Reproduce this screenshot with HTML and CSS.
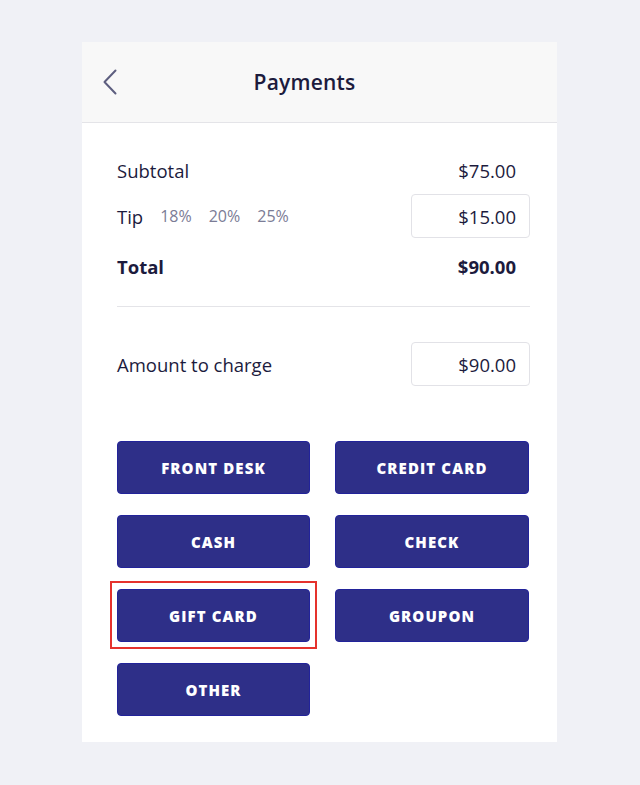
FILE: index.html
```html
<!DOCTYPE html>
<html lang="en">
<head>
  <meta charset="UTF-8">
  <meta name="viewport" content="width=device-width, initial-scale=1.0">
  <title>Payments</title>
  <link rel="stylesheet" href="styles.css">
</head>
<body>
  <div class="payments-card">
    <div class="header">
      <button class="back-button" aria-label="Back">
        <svg width="14" height="26" viewBox="0 0 14 26">
          <polyline points="12.5,1.5 1.5,13 12.5,24.5" fill="none" stroke="#5d5e7f" stroke-width="2" stroke-linecap="round" stroke-linejoin="round"/>
        </svg>
      </button>
      <div class="header-title">Payments</div>
    </div>

    <div class="content">
      <div class="summary-row">
        <span class="row-label">Subtotal</span>
        <span class="row-value">$75.00</span>
      </div>
      <div class="summary-row tip-row">
        <div class="tip-left">
          <span class="row-label">Tip</span>
          <span class="tip-option">18%</span>
          <span class="tip-option">20%</span>
          <span class="tip-option">25%</span>
        </div>
        <input class="amount-input" type="text" value="$15.00">
      </div>
      <div class="summary-row total-row">
        <span class="row-label">Total</span>
        <span class="row-value">$90.00</span>
      </div>

      <div class="divider"></div>

      <div class="summary-row charge-row">
        <span class="row-label">Amount to charge</span>
        <input class="amount-input" type="text" value="$90.00">
      </div>

      <div class="method-grid">
        <button class="method-button">FRONT DESK</button>
        <button class="method-button">CREDIT CARD</button>
        <button class="method-button">CASH</button>
        <button class="method-button">CHECK</button>
        <button class="method-button selected">GIFT CARD</button>
        <button class="method-button">GROUPON</button>
        <button class="method-button">OTHER</button>
      </div>
    </div>
  </div>
</body>
</html>
```

FILE: styles.css
```css
body {
  margin: 0;
  background-color: #f0f1f6;
  font-family: "Open Sans", "Liberation Sans", sans-serif;
  color: #1c1b3d;
}

.payments-card {
  width: 475px;
  margin: 42px 0 0 82px;
  background-color: #ffffff;
  box-sizing: border-box;
  min-height: 700px;
}

.header {
  height: 81px;
  box-sizing: border-box;
  display: flex;
  align-items: center;
  padding: 0 65px 0 21px;
  background-color: #f8f8f8;
  border-bottom: 1px solid #e4e4e8;
}

.back-button {
  border: none;
  background: none;
  padding: 0;
  display: flex;
  cursor: pointer;
}

.header-title {
  flex: 1;
  text-align: center;
  font-size: 21px;
  font-weight: 600;
  letter-spacing: 0.2px;
}

.content {
  padding: 29px 27px 26px 35px;
}

.summary-row {
  display: flex;
  justify-content: space-between;
  align-items: center;
  height: 36px;
  font-size: 18.5px;
}

.row-value {
  padding-right: 14px;
}

.tip-row {
  height: 44px;
  margin-top: 6px;
}

.tip-left {
  display: flex;
  align-items: center;
}

.tip-option {
  font-size: 16px;
  color: #7b7c96;
  margin-left: 17px;
}

.tip-option:first-of-type {
  margin-left: 21px;
}

.total-row {
  margin-top: 10px;
  font-weight: 700;
}

.amount-input {
  width: 119px;
  height: 44px;
  box-sizing: border-box;
  border: 1px solid #e2e2e7;
  border-radius: 4px;
  padding: 0 13px 0 0;
  text-align: right;
  font-family: inherit;
  font-size: 18.5px;
  color: #1c1b3d;
  background-color: #ffffff;
}

.divider {
  height: 1px;
  background-color: #e4e4e8;
  margin-top: 22px;
}

.charge-row {
  height: 44px;
  margin-top: 35px;
}

.method-grid {
  display: grid;
  grid-template-columns: 193px 194px;
  column-gap: 25px;
  row-gap: 21px;
  margin-top: 55px;
}

.method-button {
  position: relative;
  height: 53px;
  border: 1px solid #22239a;
  border-radius: 4px;
  background-color: #2e2f88;
  color: #ffffff;
  font-family: inherit;
  font-size: 15px;
  font-weight: 800;
  letter-spacing: 1.1px;
  cursor: pointer;
}

/* square highlight frame around the chosen method */
.method-button.selected::after {
  content: "";
  position: absolute;
  top: -9px;
  left: -8px;
  right: -8px;
  bottom: -8px;
  border: 2px solid #e5322d;
}
```
